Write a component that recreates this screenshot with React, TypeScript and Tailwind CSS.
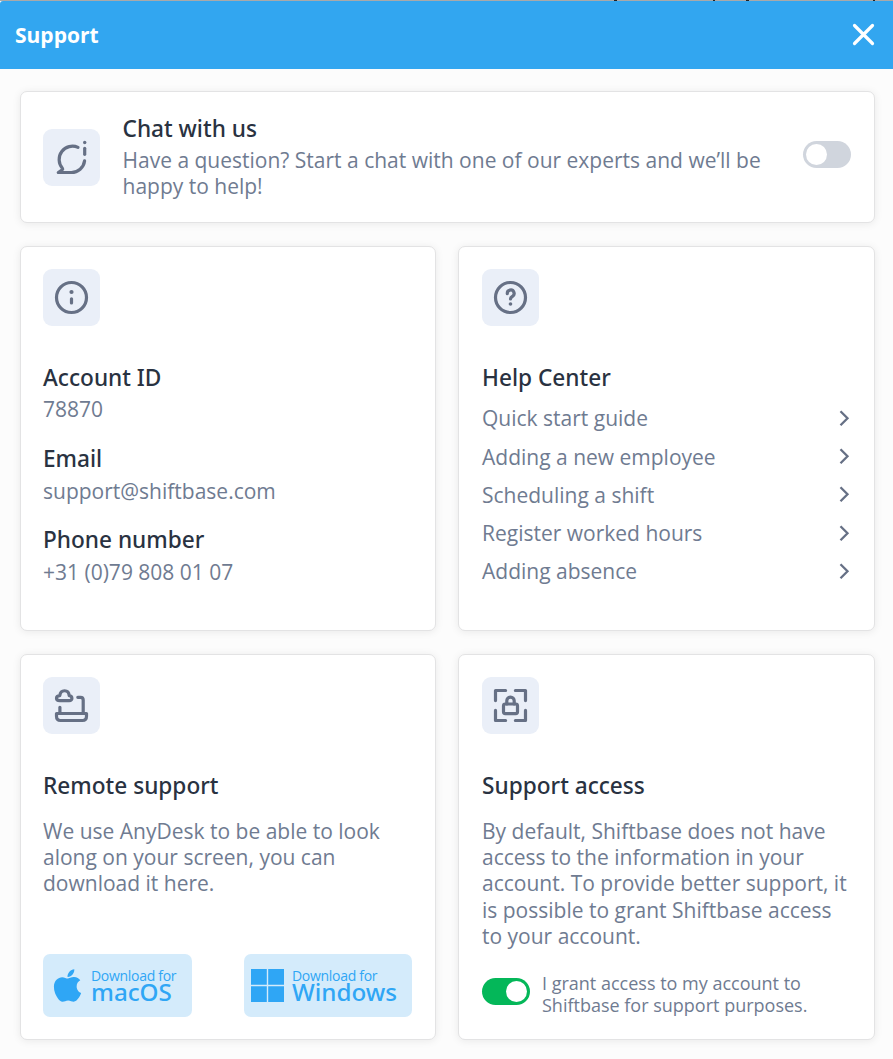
import { useState, type ReactNode } from 'react';
import { FaApple } from 'react-icons/fa';

const helpLinks = [
    'Quick start guide',
    'Adding a new employee',
    'Scheduling a shift',
    'Register worked hours',
    'Adding absence',
];

const accountDetails = [
    { label: 'Account ID', value: '78870' },
    { label: 'Email', value: 'support@shiftbase.com' },
    { label: 'Phone number', value: '+31 (0)79 808 01 07' },
];

function Card({ className = '', children }: { className?: string; children: ReactNode }) {
    return (
        <section
            className={`rounded-[7px] border border-[#e3e3e4] bg-white pr-[23px] shadow-[0_1px_9px_rgba(0,0,0,0.08)] ${className}`}
        >
            {children}
        </section>
    );
}

function IconTile({ children }: { children: ReactNode }) {
    return (
        <div className="size-[57px] shrink-0 rounded-[9px] bg-[#eaeff8] text-[#667085]">
            <svg
                viewBox="0 0 57 57"
                className="size-full"
                fill="none"
                stroke="currentColor"
                strokeWidth="3.2"
                strokeLinecap="round"
                strokeLinejoin="round"
            >
                {children}
            </svg>
        </div>
    );
}

function Toggle({ checked, label, onChange }: { checked: boolean; label: string; onChange: () => void }) {
    return (
        <button
            type="button"
            role="switch"
            aria-checked={checked}
            aria-label={label}
            onClick={onChange}
            className={`flex h-[27px] w-12 shrink-0 rounded-full p-[3px] ${
                checked ? 'justify-end bg-[#04b759]' : 'justify-start bg-[#d0d5dd]'
            }`}
        >
            <span className="size-[21px] rounded-full bg-white" />
        </button>
    );
}

function Title({ children }: { children: ReactNode }) {
    return <h2 className="font-['Noto_Sans','Open_Sans',sans-serif] text-[22.65px] leading-[28px] font-medium text-[#293241]">{children}</h2>;
}

export default function App() {
    const [chat, setChat] = useState(false);
    const [access, setAccess] = useState(true);

    return (
        <div className="flex h-[1059px] w-[893px] flex-col overflow-hidden bg-[#fcfcfc] font-['Open_Sans','Noto_Sans',sans-serif] text-[21px] leading-[26.25px] text-[#6f7b91]">
            {/* Edge of the page behind the panel */}
            <div className="flex h-px shrink-0 bg-[#a9a9a9]">
                <span className="ml-[614px] w-[3px] bg-[#222]" />
                <span className="ml-[96px] w-[2px] bg-[#222]" />
                <span className="ml-[31px] w-[3px] bg-[#222]" />
                <span className="ml-[124px] w-[2px] bg-[#222]" />
            </div>
            <header className="flex h-[68px] shrink-0 items-center justify-between rounded-tl-[3px] bg-[#32a6f0] pr-[18px] pl-[15px] text-white">
                <h1 className="text-[21px] font-bold">Support</h1>
                <button type="button" aria-label="Close" className="mb-[2px]">
                    <svg viewBox="0 0 23 23" className="size-[23px]" stroke="currentColor" strokeWidth="3.2" strokeLinecap="round">
                        <path d="M2.5 2.5 20.5 20.5M20.5 2.5 2.5 20.5" />
                    </svg>
                </button>
            </header>

            <main className="flex flex-col gap-[23px] pt-[22px] pr-[18px] pl-5">
                <Card className="flex h-[132px] items-center pl-[22px]">
                    <IconTile>
                        <circle cx="41.7" cy="13.5" r="1.7" fill="currentColor" stroke="none" />
                        <path d="M41.7 19.3v6" />
                        <path d="M35 18.4A13.3 13.3 0 0 0 19.4 39.2c.5.6.4 1-.1 1.5l-4 2.8H28.2A13.3 13.3 0 0 0 41.6 31.8" />
                    </IconTile>
                    <div className="ml-[22.5px] w-[650px]">
                        <Title>Chat with us</Title>
                        <p className="mt-[4px]">
                            Have a question? Start a chat with one of our experts and we’ll be happy to help!
                        </p>
                    </div>
                    <div className="mb-[5px] ml-auto">
                        <Toggle checked={chat} label="Chat with us" onChange={() => setChat(!chat)} />
                    </div>
                </Card>

                <div className="grid grid-cols-[416px_417px] gap-x-[22px] gap-y-[23px]">
                    <Card className="h-[385px] pt-[22px] pl-[22px]">
                        <IconTile>
                            <circle cx="28.5" cy="28.5" r="15" />
                            <circle cx="28.5" cy="23" r="2.1" fill="currentColor" stroke="none" />
                            <path d="M28.5 29.8v4.2" />
                        </IconTile>
                        <dl className="mt-[38px] flex flex-col gap-[22.5px]">
                            {accountDetails.map((item) => (
                                <div key={item.label}>
                                    <dt>
                                        <Title>{item.label}</Title>
                                    </dt>
                                    <dd className="mt-[4.4px]">{item.value}</dd>
                                </div>
                            ))}
                        </dl>
                    </Card>

                    <Card className="h-[385px] pt-[22px] pl-[23px]">
                        <IconTile>
                            <circle cx="28.5" cy="28.5" r="15" />
                            <path d="M25.3 24.6a3.4 3.4 0 1 1 5.2 2.7c-1.2.8-2 1.3-2 2.7" />
                            <circle cx="28.5" cy="35" r="1.8" fill="currentColor" stroke="none" />
                        </IconTile>
                        <div className="mt-[38px]">
                            <Title>Help Center</Title>
                        </div>
                        <ul className="mt-[7.3px]">
                            {helpLinks.map((link) => (
                                <li key={link} className="flex h-[38.25px] items-center justify-between">
                                    <a href="#">{link}</a>
                                    <svg viewBox="0 0 12 17" className="mr-px h-[17px] w-3" fill="none" stroke="#667085" strokeWidth="2.3">
                                        <path d="M2.5 1.2 9.5 8.2 2.5 15.2" />
                                    </svg>
                                </li>
                            ))}
                        </ul>
                    </Card>

                    <Card className="flex h-[386px] flex-col pt-[22px] pb-[22px] pl-[22px]">
                        <IconTile>
                            <path d="M16.8 23.7H26.2C30 23.7 29.6 18.9 26.2 18.6C25.6 12.1 17.6 12.1 16.8 18.6C12.4 19 12.4 23.7 16.8 23.7Z" />
                            <path d="M34.8 20.3H37.5Q40.2 20.3 40.2 23V36.5M16.9 30.3V36.5" />
                            <path d="M13.5 36.5H43.5V39.3Q43.5 43.5 39.5 43.5H17.5Q13.5 43.5 13.5 39.3Z" />
                        </IconTile>
                        <div className="mt-[38px]">
                            <Title>Remote support</Title>
                        </div>
                        <p className="mt-[17.8px]">
                            We use AnyDesk to be able to look along on your screen, you can download it here.
                        </p>
                        <div className="mt-auto flex justify-between text-[#2fa6f5]">
                            <button type="button" className="flex h-[63px] w-[149px] items-center rounded-[7px] bg-[#d4ebfb] pl-[6px] text-left">
                                <FaApple className="size-[37px]" />
                                <span className="mb-[2px] ml-[5px] flex flex-col">
                                    <span className="text-[14px] leading-[15px] tracking-[-0.3px]">Download for</span>
                                    <span className="font-['Noto_Sans','Open_Sans',sans-serif] text-[24.2px] leading-[18px] font-medium">macOS</span>
                                </span>
                            </button>
                            <button type="button" className="flex h-[63px] w-[168px] items-center rounded-[7px] bg-[#d4ebfb] pl-[7px] text-left">
                                <svg viewBox="0 0 33 33" className="size-[33px]" fill="currentColor">
                                    <path d="M0 0h15.8v15.8H0zM17.2 0H33v15.8H17.2zM0 17.2h15.8V33H0zM17.2 17.2H33V33H17.2z" />
                                </svg>
                                <span className="mb-[2px] ml-[8px] flex flex-col">
                                    <span className="text-[14px] leading-[15px] tracking-[-0.3px]">Download for</span>
                                    <span className="font-['Noto_Sans','Open_Sans',sans-serif] text-[24.2px] leading-[18px] font-medium">Windows</span>
                                </span>
                            </button>
                        </div>
                    </Card>

                    <Card className="flex h-[386px] flex-col pt-[22px] pb-[22px] pl-[23px]">
                        <IconTile>
                            <path d="M23.6 13.5H13.5V23.6M33.4 13.5H43.5V23.6M13.5 33.4V43.5H23.6M43.5 33.4V43.5H33.4" />
                            <rect x="21.5" y="27" width="14" height="9.6" rx="1.8" />
                            <path d="M24.8 27V23.8a3.7 3.7 0 0 1 7.4 0V27" />
                        </IconTile>
                        <div className="mt-[38px]">
                            <Title>Support access</Title>
                        </div>
                        <p className="mt-[17.8px]">
                            By default, Shiftbase does not have access to the information in your account. To provide better support, it
                            is possible to grant Shiftbase access to your account.
                        </p>
                        <div className="mt-[22.7px] flex items-start gap-3 text-[18px] leading-[22.5px]">
                            <div className="mt-[6px]">
                                <Toggle checked={access} label="Grant access" onChange={() => setAccess(!access)} />
                            </div>
                            <span className="w-[280px]">I grant access to my account to Shiftbase for support purposes.</span>
                        </div>
                    </Card>
                </div>
            </main>
        </div>
    );
}
